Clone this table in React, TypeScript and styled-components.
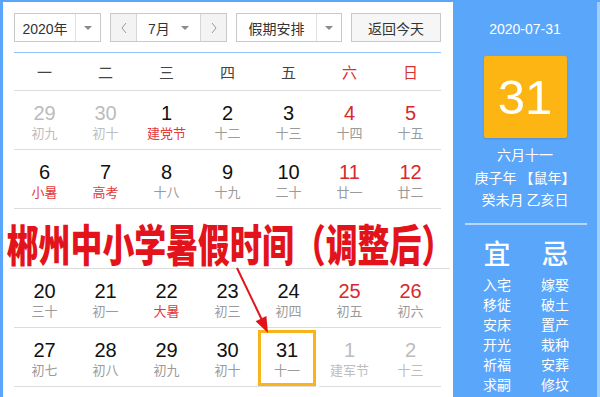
import React from 'react';
import styled, { createGlobalStyle } from 'styled-components';

const GlobalStyle = createGlobalStyle`
  html, body {
    margin: 0;
    padding: 0;
    background: #fff;
  }
  body {
    font-family: 'Liberation Sans', 'Noto Sans CJK SC', sans-serif;
  }
`;

const Frame = styled.div`
  width: 600px;
  height: 397px;
  box-sizing: border-box;
  display: flex;
  padding: 2px 0 0 3px;
  background: #5aa6fb;
  overflow: hidden;
`;

const Main = styled.div`
  position: relative;
  width: 450px;
  box-sizing: border-box;
  padding: 11px 12px 0 11px;
  background: #fff;
`;

const Toolbar = styled.div`
  display: flex;
  gap: 9px;
  height: 29px;
`;

const Select = styled.div<{ $w: number }>`
  display: flex;
  width: ${(p) => p.$w}px;
  box-sizing: border-box;
  border: 1px solid #c9c9c9;
  background: #fff;
  font-size: 14px;
  color: #333;
  white-space: nowrap;
`;

const SelectLabel = styled.div`
  flex: 1;
  display: flex;
  align-items: center;
  justify-content: center;
`;

const Caret = styled.div<{ $divided?: boolean }>`
  width: 24px;
  flex: none;
  display: flex;
  align-items: center;
  justify-content: center;
  border-left: ${(p) => (p.$divided ? '1px solid #e0e0e0' : 'none')};

  &::after {
    content: '';
    border-left: 4px solid transparent;
    border-right: 4px solid transparent;
    border-top: 4px solid #8a8a8a;
  }
`;

const StepButton = styled.div<{ $side: 'left' | 'right' }>`
  width: 25px;
  flex: none;
  display: flex;
  align-items: center;
  justify-content: center;
  background: #f3f3f3;
  ${(p) => (p.$side === 'left' ? 'border-right: 1px solid #d6d6d6;' : 'border-left: 1px solid #d6d6d6;')}
`;

const MonthLabel = styled.div`
  flex: 1;
  display: flex;
  align-items: stretch;
  padding: 0 3px 0 11px;

  & > span {
    display: flex;
    align-items: center;
    margin-right: auto;
  }
`;

const TodayButton = styled.div`
  width: 90px;
  box-sizing: border-box;
  display: flex;
  align-items: center;
  justify-content: center;
  border: 1px solid #c9c9c9;
  background: #f6f6f6;
  font-size: 14px;
  color: #333;
`;

const BlueRule = styled.div`
  margin-top: 10px;
  height: 1px;
  background: #8fc3f7;
`;

const Grid = styled.div`
  display: grid;
  grid-template-columns: repeat(7, 61px);
`;

const HeadCell = styled.div<{ $red?: boolean }>`
  height: 37px;
  display: flex;
  align-items: center;
  justify-content: center;
  border-bottom: 1px solid #dcdcdc;
  font-size: 15px;
  color: ${(p) => (p.$red ? '#d9312f' : '#444')};
`;

const DayCell = styled.div<{ $selected?: boolean }>`
  height: 59px;
  box-sizing: border-box;
  padding-top: 10px;
  border-bottom: 1px solid #dcdcdc;
  text-align: center;
  ${(p) =>
    p.$selected
      ? `box-shadow: inset 0 0 0 3px #fbb31b; margin-right: 3px; margin-top: 2px; height: 57px; padding-top: 8px;`
      : ''}
`;

const DayNum = styled.div<{ $tone: 'normal' | 'red' | 'muted' }>`
  font-size: 20px;
  line-height: 24px;
  color: ${(p) => (p.$tone === 'red' ? '#d7282c' : p.$tone === 'muted' ? '#bcbcbc' : '#111')};
`;

const Lunar = styled.div<{ $tone: 'normal' | 'red' | 'muted' }>`
  font-size: 13px;
  line-height: 17px;
  color: ${(p) => (p.$tone === 'red' ? '#e23a3a' : p.$tone === 'muted' ? '#bdbdbd' : '#9a9a9a')};
`;

const Banner = styled.div`
  grid-column: 1 / -1;
  height: 59px;
  margin: 0 -9px 0 -4px;
  display: flex;
  align-items: center;
  justify-content: center;
  border-bottom: 1px solid #dcdcdc;
  background: #fff;
`;

const BannerText = styled.span`
  display: inline-block;
  white-space: nowrap;
  margin-top: 8px;
  font-family: 'Noto Sans CJK SC', sans-serif;
  font-size: 44px;
  line-height: 44px;
  font-weight: 900;
  color: #e3131b;
  transform: scaleX(0.725);
`;

const Arrow = styled.svg`
  position: absolute;
  left: 0;
  top: 0;
  pointer-events: none;
`;

const Side = styled.div`
  width: 144px;
  display: flex;
  flex-direction: column;
  align-items: center;
  padding-top: 18px;
  color: #fff;
`;

const DateLine = styled.div`
  font-size: 14px;
  line-height: 18px;
`;

const DayBox = styled.div`
  margin-top: 18px;
  width: 83px;
  height: 82px;
  display: flex;
  align-items: center;
  justify-content: center;
  background: #fdb514;
  border-radius: 2px;
  box-shadow: 0 1px 2px rgba(0, 0, 0, 0.15);
  font-size: 49px;
  color: #fff;
`;

const LunarInfo = styled.div`
  margin-top: 5px;
  font-family: 'Noto Sans CJK SC', sans-serif;
  font-size: 14px;
  line-height: 22.5px;
  text-align: center;
`;

const SideRule = styled.div`
  align-self: stretch;
  margin: 12px 10px 0 12px;
  height: 2px;
  background: #b7d8fc;
`;

const Almanac = styled.div`
  margin-top: 12px;
  align-self: stretch;
  display: grid;
  grid-template-columns: 58px 58px;
  padding-left: 15px;
  font-family: 'Noto Sans CJK SC', sans-serif;
  text-align: center;
`;

const AlmanacHead = styled.div`
  font-size: 27px;
  line-height: 32px;
  font-weight: 500;
  margin-bottom: 5px;
`;

const AlmanacItem = styled.div`
  font-size: 14px;
  line-height: 20px;
`;

const Edge = styled.div`
  width: 3px;
  background: #a3cdfb;
`;

type Tone = 'normal' | 'red' | 'muted';
type Day = { n: number; l: string; nt?: Tone; lt?: Tone; sel?: boolean };

const weekdays = ['一', '二', '三', '四', '五', '六', '日'];

const rows: Day[][] = [
  [
    { n: 29, l: '初九', nt: 'muted', lt: 'muted' },
    { n: 30, l: '初十', nt: 'muted', lt: 'muted' },
    { n: 1, l: '建党节', lt: 'red' },
    { n: 2, l: '十二' },
    { n: 3, l: '十三' },
    { n: 4, l: '十四', nt: 'red' },
    { n: 5, l: '十五', nt: 'red' },
  ],
  [
    { n: 6, l: '小暑', lt: 'red' },
    { n: 7, l: '高考', lt: 'red' },
    { n: 8, l: '十八' },
    { n: 9, l: '十九' },
    { n: 10, l: '二十' },
    { n: 11, l: '廿一', nt: 'red' },
    { n: 12, l: '廿二', nt: 'red' },
  ],
  [],
  [
    { n: 20, l: '三十' },
    { n: 21, l: '初一' },
    { n: 22, l: '大暑', lt: 'red' },
    { n: 23, l: '初三' },
    { n: 24, l: '初四' },
    { n: 25, l: '初五', nt: 'red' },
    { n: 26, l: '初六', nt: 'red' },
  ],
  [
    { n: 27, l: '初七' },
    { n: 28, l: '初八' },
    { n: 29, l: '初九' },
    { n: 30, l: '初十' },
    { n: 31, l: '十一', sel: true },
    { n: 1, l: '建军节', nt: 'muted', lt: 'muted' },
    { n: 2, l: '十三', nt: 'muted', lt: 'muted' },
  ],
];

const good = ['入宅', '移徙', '安床', '开光', '祈福', '求嗣'];
const bad = ['嫁娶', '破土', '置产', '栽种', '安葬', '修坟'];

const Chevron = ({ dir }: { dir: 'left' | 'right' }) => (
  <svg width="8" height="12" viewBox="0 0 8 12">
    <path
      d={dir === 'left' ? 'M6 1 L2 6 L6 11' : 'M2 1 L6 6 L2 11'}
      fill="none"
      stroke="#9a9a9a"
      strokeWidth="1"
    />
  </svg>
);

export default function App() {
  return (
    <>
      <GlobalStyle />
      <Frame>
        <Main>
          <Toolbar>
            <Select $w={87}>
              <SelectLabel>2020年</SelectLabel>
              <Caret $divided />
            </Select>
            <Select $w={117}>
              <StepButton $side="left">
                <Chevron dir="left" />
              </StepButton>
              <MonthLabel>
                <span>7月</span>
                <Caret />
              </MonthLabel>
              <StepButton $side="right">
                <Chevron dir="right" />
              </StepButton>
            </Select>
            <Select $w={106}>
              <SelectLabel>假期安排</SelectLabel>
              <Caret $divided />
            </Select>
            <TodayButton>返回今天</TodayButton>
          </Toolbar>
          <BlueRule />
          <Grid>
            {weekdays.map((w, i) => (
              <HeadCell key={w} $red={i > 4}>
                {w}
              </HeadCell>
            ))}
            {rows.map((row, ri) =>
              row.length === 0 ? (
                <Banner key={ri}>
                  <BannerText>郴州中小学暑假时间（调整后）</BannerText>
                </Banner>
              ) : (
                row.map((d, ci) => (
                  <DayCell key={`${ri}-${ci}`} $selected={d.sel}>
                    <DayNum $tone={d.nt ?? 'normal'}>{d.n}</DayNum>
                    <Lunar $tone={d.lt ?? 'normal'}>{d.l}</Lunar>
                  </DayCell>
                ))
              )
            )}
          </Grid>
          <Arrow width="450" height="395" viewBox="0 0 450 395">
            <line x1="234" y1="266" x2="258.5" y2="317" stroke="#e3131b" strokeWidth="2" />
            <polygon points="265,331 252.6,319.2 263.4,314" fill="#e3131b" />
          </Arrow>
        </Main>
        <Side>
          <DateLine>2020-07-31</DateLine>
          <DayBox>31</DayBox>
          <LunarInfo>
            <div>六月十一</div>
            <div>庚子年 【鼠年】</div>
            <div>癸未月 乙亥日</div>
          </LunarInfo>
          <SideRule />
          <Almanac>
            <AlmanacHead>宜</AlmanacHead>
            <AlmanacHead>忌</AlmanacHead>
            {good.map((g, i) => (
              <React.Fragment key={g}>
                <AlmanacItem>{g}</AlmanacItem>
                <AlmanacItem>{bad[i]}</AlmanacItem>
              </React.Fragment>
            ))}
          </Almanac>
        </Side>
        <Edge />
      </Frame>
    </>
  );
}
